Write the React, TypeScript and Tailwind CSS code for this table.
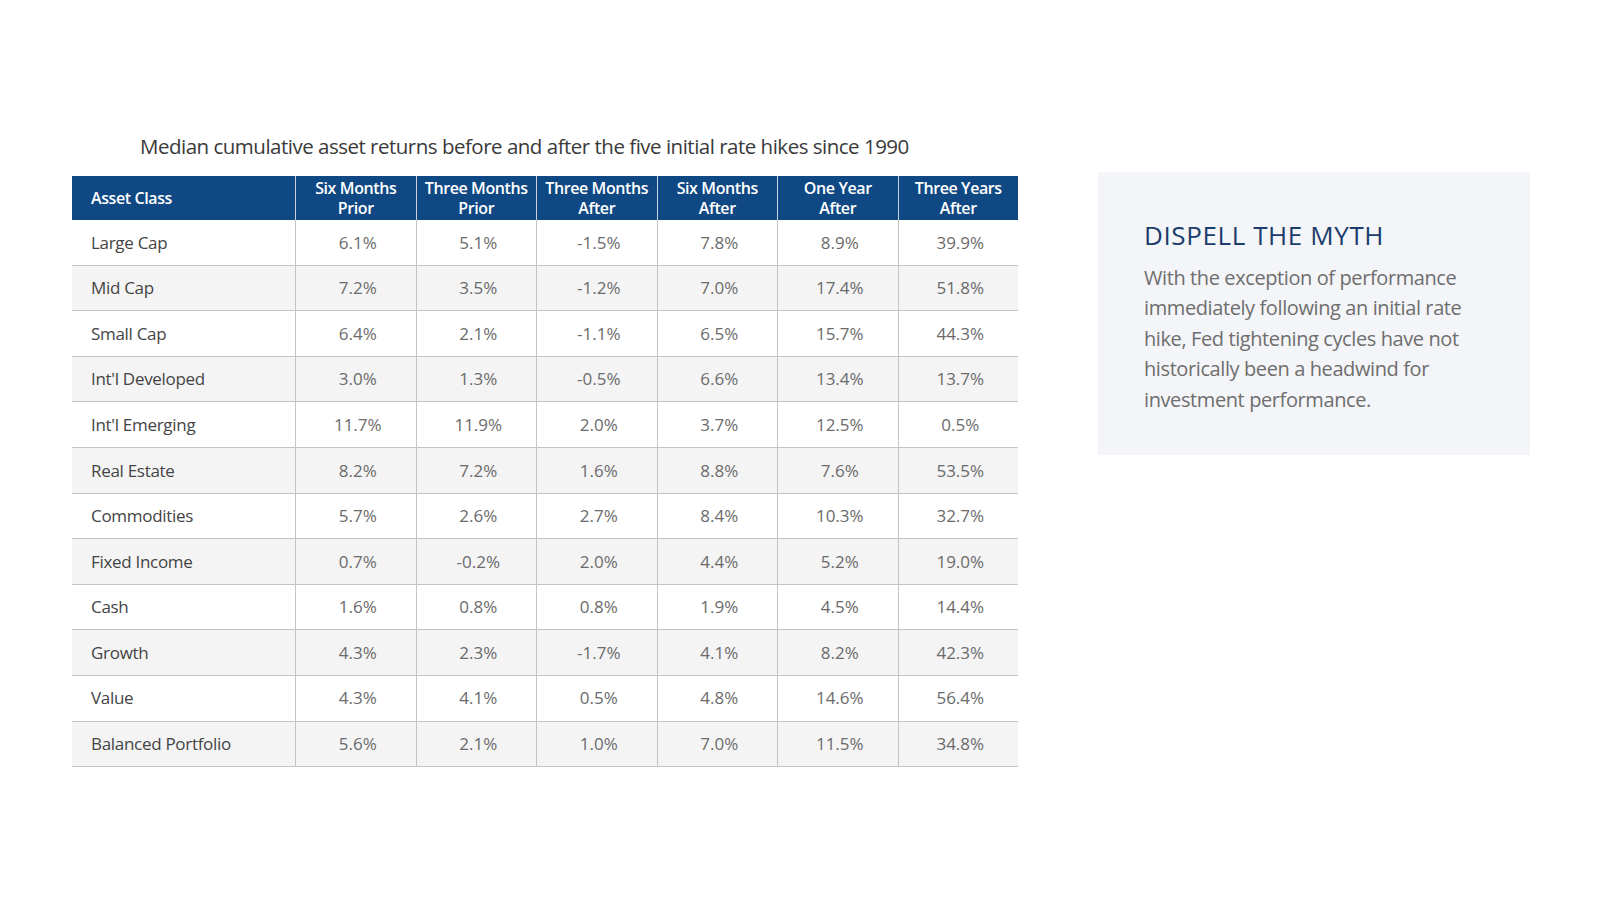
const columns = [
  ['Six Months', 'Prior'],
  ['Three Months', 'Prior'],
  ['Three Months', 'After'],
  ['Six Months', 'After'],
  ['One Year', 'After'],
  ['Three Years', 'After'],
];

const rows: [string, string[]][] = [
  ['Large Cap', ['6.1%', '5.1%', '-1.5%', '7.8%', '8.9%', '39.9%']],
  ['Mid Cap', ['7.2%', '3.5%', '-1.2%', '7.0%', '17.4%', '51.8%']],
  ['Small Cap', ['6.4%', '2.1%', '-1.1%', '6.5%', '15.7%', '44.3%']],
  ["Int'l Developed", ['3.0%', '1.3%', '-0.5%', '6.6%', '13.4%', '13.7%']],
  ["Int'l Emerging", ['11.7%', '11.9%', '2.0%', '3.7%', '12.5%', '0.5%']],
  ['Real Estate', ['8.2%', '7.2%', '1.6%', '8.8%', '7.6%', '53.5%']],
  ['Commodities', ['5.7%', '2.6%', '2.7%', '8.4%', '10.3%', '32.7%']],
  ['Fixed Income', ['0.7%', '-0.2%', '2.0%', '4.4%', '5.2%', '19.0%']],
  ['Cash', ['1.6%', '0.8%', '0.8%', '1.9%', '4.5%', '14.4%']],
  ['Growth', ['4.3%', '2.3%', '-1.7%', '4.1%', '8.2%', '42.3%']],
  ['Value', ['4.3%', '4.1%', '0.5%', '4.8%', '14.6%', '56.4%']],
  ['Balanced Portfolio', ['5.6%', '2.1%', '1.0%', '7.0%', '11.5%', '34.8%']],
];

function ReturnsTable() {
  return (
    <div className="w-[946px] shrink-0">
      <h2 className="pl-[68px] text-[20.5px] leading-[28px] tracking-[-0.5px] text-[#3a3a3a]">
        Median cumulative asset returns before and after the five initial rate hikes since 1990
      </h2>
      <div className="mt-[16px] grid grid-cols-[223px_repeat(6,1fr)]">
        {/* header */}
        <div className="flex h-[44px] items-center bg-[#0f4883] pl-[19px] text-[16px] font-semibold tracking-[-0.4px] text-white">
          Asset Class
        </div>
        {columns.map(([a, b]) => (
          <div
            key={a + b}
            className="flex h-[44px] flex-col items-center justify-center border-l border-[#c9cfd8] bg-[#0f4883] text-[16px] font-semibold leading-[20px] tracking-[-0.4px] text-white"
          >
            <span>{a}</span>
            <span>{b}</span>
          </div>
        ))}

        {rows.map(([label, values], i) => {
          const bg = i % 2 === 0 ? 'bg-white' : 'bg-[#f4f4f5]';
          return [
            <div
              key={label}
              className={`flex h-[45.6px] items-center border-b border-[#c4c4c4] pl-[19px] text-[17px] tracking-[-0.3px] text-[#444] ${bg}`}
            >
              {label}
            </div>,
            ...values.map((v, j) => (
              <div
                key={label + j}
                className={`flex h-[45.6px] items-center justify-center border-b border-l border-[#c4c4c4] pl-[4px] text-[17px] text-[#6b6b6b] ${bg}`}
              >
                {v}
              </div>
            )),
          ];
        })}
      </div>
    </div>
  );
}

export default function App() {
  return (
    <div
      className="flex h-[900px] w-[1600px] items-start gap-[80px] bg-white pl-[72px] pt-[132px]"
      style={{ fontFamily: '"Open Sans", "Noto Sans", sans-serif' }}
    >
      <ReturnsTable />
      <aside className="mt-[40px] h-[283px] w-[432px] bg-[#f4f5f8] pl-[46px] pt-[45px]">
        <h3 className="text-[26px] leading-[36px] tracking-[0.6px] text-[#1c3d6b]">DISPELL THE MYTH</h3>
        <p className="mt-[10px] w-[340px] text-[20px] leading-[30.4px] tracking-[-0.4px] text-[#6e6e6e]">
          With the exception of performance immediately following an initial rate hike, Fed tightening cycles have not
          historically been a headwind for investment performance.
        </p>
      </aside>
    </div>
  );
}
